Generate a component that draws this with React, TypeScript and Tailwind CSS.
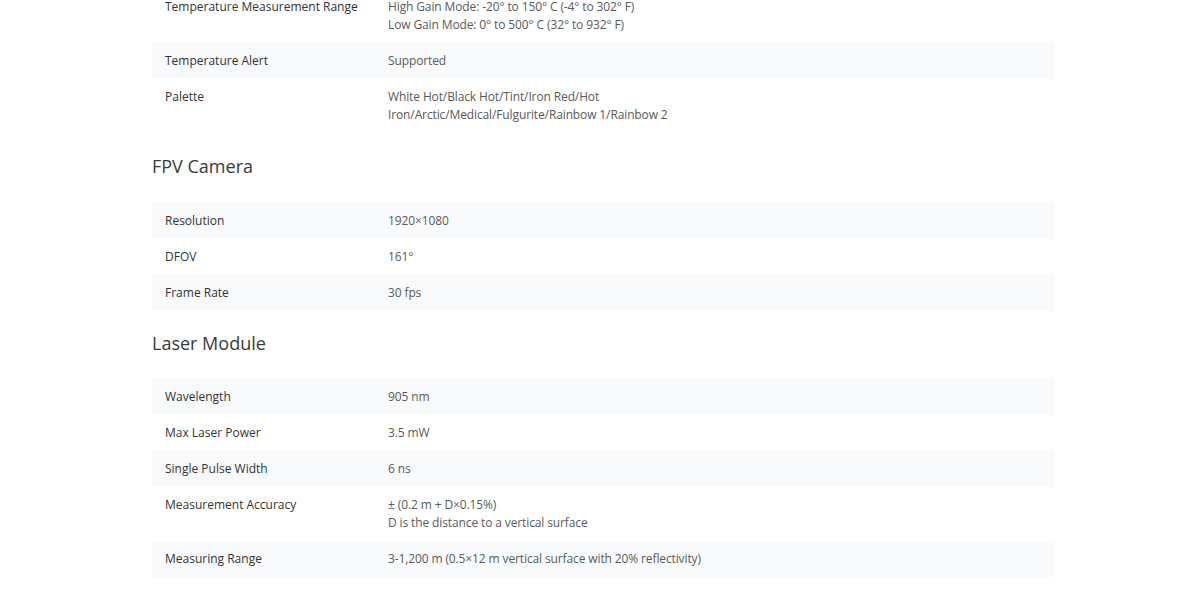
import React from "react";

type Row = { label: string; value: string[] };

const top: Row[] = [
  { label: "Temperature Measurement Range", value: ["High Gain Mode: -20° to 150° C (-4° to 302° F)", "Low Gain Mode: 0° to 500° C (32° to 932° F)"] },
  { label: "Temperature Alert", value: ["Supported"] },
  { label: "Palette", value: ["White Hot/Black Hot/Tint/Iron Red/Hot", "Iron/Arctic/Medical/Fulgurite/Rainbow 1/Rainbow 2"] },
];

const fpv: Row[] = [
  { label: "Resolution", value: ["1920×1080"] },
  { label: "DFOV", value: ["161°"] },
  { label: "Frame Rate", value: ["30 fps"] },
];

const laser: Row[] = [
  { label: "Wavelength", value: ["905 nm"] },
  { label: "Max Laser Power", value: ["3.5 mW"] },
  { label: "Single Pulse Width", value: ["6 ns"] },
  { label: "Measurement Accuracy", value: ["± (0.2 m + D×0.15%)", "D is the distance to a vertical surface"] },
  { label: "Measuring Range", value: ["3-1,200 m (0.5×12 m vertical surface with 20% reflectivity)"] },
];

function Table({ rows, startShaded }: { rows: Row[]; startShaded: boolean }) {
  return (
    <div className="flex flex-col">
      {rows.map((r, i) => {
        const shaded = startShaded ? i % 2 === 0 : i % 2 === 1;
        return (
          <div key={r.label} className={`flex py-[9px] text-[12px] leading-[18px] ${shaded ? "bg-[#f9fafb]" : "bg-white"}`}>
            <div className="w-[236px] shrink-0 pl-[13px] font-medium text-[#333333]">{r.label}</div>
            <div className="flex flex-col font-normal tracking-[-0.12px] text-[#5a5a5a]">
              {r.value.map((v) => (
                <span key={v}>{v}</span>
              ))}
            </div>
          </div>
        );
      })}
    </div>
  );
}

export default function App() {
  return (
    <div className="w-[1202px] h-[596px] overflow-hidden bg-white" style={{ fontFamily: '"Open Sans", "Noto Sans", sans-serif' }}>
      <div className="ml-[152px] w-[902px] -mt-[11px]">
        <Table rows={top} startShaded={false} />
        <h2 className="mt-[20px] mb-[24px] text-[18px] leading-[26px] font-medium text-[#3a3a3a]">FPV Camera</h2>
        <Table rows={fpv} startShaded={true} />
        <h2 className="mt-[19px] mb-[23px] text-[18px] leading-[26px] font-medium text-[#3a3a3a]">Laser Module</h2>
        <Table rows={laser} startShaded={true} />
      </div>
    </div>
  );
}
